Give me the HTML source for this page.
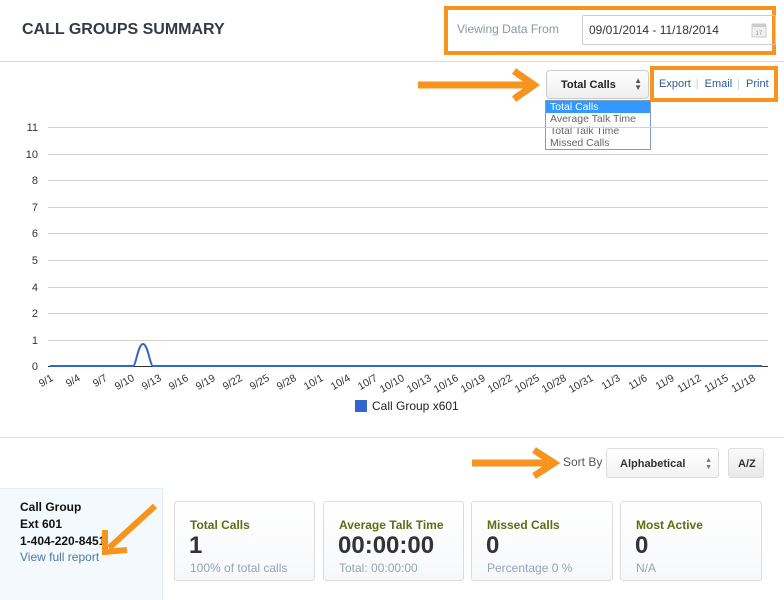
<!DOCTYPE html>
<html><head><meta charset="utf-8"><style>
*{margin:0;padding:0;box-sizing:border-box}
body{width:784px;height:600px;background:#fff;font-family:"Liberation Sans",Arial,sans-serif;position:relative;overflow:hidden}
.a{position:absolute}
.card{position:absolute;top:501px;height:80px;border:1px solid #dcdcdc;border-radius:3px;background:linear-gradient(#fff,#f7f8fa)}
.card .t{position:absolute;left:15px;top:16px;font-size:12px;font-weight:bold;color:#5f6d12}
.card .v{position:absolute;left:14px;top:30px;font-size:24px;font-weight:bold;color:#333}
.card .s{position:absolute;left:15px;top:59px;font-size:12px;color:#94a3b8}
</style></head><body>
<div class="a" style="left:22px;top:21px;font-size:16px;font-weight:bold;color:#333a45">CALL GROUPS SUMMARY</div>
<div class="a" style="left:444px;top:6px;width:332px;height:49px;border:4px solid #f7941d"></div>
<div class="a" style="left:457px;top:22px;font-size:12px;color:#8a96a3">Viewing Data From</div>
<div class="a" style="left:582px;top:15px;width:194px;height:30px;border:1px solid #ccc;border-radius:2px"></div>
<div class="a" style="left:589px;top:23px;font-size:12px;color:#333">09/01/2014 - 11/18/2014</div>
<svg class="a" style="left:751px;top:21px" width="17" height="17"><rect x="1" y="3" width="14" height="13" fill="#f0f0f0" stroke="#ccc"/><rect x="1" y="3" width="14" height="3" fill="#ccc"/><text x="4.5" y="14" font-size="6" fill="#999" font-family="Liberation Sans">17</text></svg>
<div class="a" style="left:0;top:61px;width:784px;height:1px;background:#d8d8d8"></div>
<svg class="a" style="left:418px;top:68px" width="125" height="36"><path d="M0 17H112" stroke="#f7941d" stroke-width="7"/><path d="M96 3L116 17L96 31" fill="none" stroke="#f7941d" stroke-width="7"/></svg>
<div class="a" style="left:546px;top:70px;width:103px;height:29px;border:1px solid #ccc;border-radius:4px;background:linear-gradient(#fff,#eee);font-size:11px;font-weight:bold;color:#222;padding:8px 0 0 14px">Total Calls<span style="position:absolute;right:6px;top:6px;font-size:8px;line-height:7px;color:#555">▲<br>▼</span></div>
<div class="a" style="left:545px;top:100px;width:106px;height:50px;border:1px solid #7a9cc6;background:#fff;font-size:10.5px;line-height:12px;color:#666">
<div style="background:#3399ff;color:#fff;padding-left:4px">Total Calls</div><div style="padding-left:4px">Average Talk Time</div><div style="padding-left:4px">Total Talk Time</div><div style="padding-left:4px">Missed Calls</div></div>
<div class="a" style="left:650px;top:66px;width:128px;height:36px;border:4px solid #f7941d"></div>
<div class="a" style="left:659px;top:78px;font-size:11px;color:#2b5b9a">Export<span style="color:#ccc;margin:0 6px 0 5px">|</span>Email<span style="color:#ccc;margin:0 6px 0 5px">|</span>Print</div>
<svg class="a" style="left:0;top:110px" width="784" height="310" font-family="Liberation Sans" font-size="11" fill="#333">
<g stroke="#d0d0d0" stroke-width="1">
<path d="M48 17.5H768M48 44.5H768M48 70.5H768M48 97.5H768M48 123.5H768M48 150.5H768M48 177.5H768M48 203.5H768M48 230.5H768"/></g>
<g text-anchor="end"><text x="38" y="21">11</text><text x="38" y="48">10</text><text x="38" y="74">8</text><text x="38" y="101">7</text><text x="38" y="127">6</text><text x="38" y="154">5</text><text x="38" y="181">4</text><text x="38" y="207">2</text><text x="38" y="234">1</text><text x="38" y="260">0</text></g>
<path d="M48 256.5H768" stroke="#333"/>
<path d="M50 256H133C136 256 138 234 143 234C148 234 150 256 153 256H762" fill="none" stroke="#3366cc" stroke-width="2"/>
<g text-anchor="end" font-size="10.5">
<text transform="translate(54,270) rotate(-30)">9/1</text><text transform="translate(81,270) rotate(-30)">9/4</text><text transform="translate(108,270) rotate(-30)">9/7</text><text transform="translate(135,270) rotate(-30)">9/10</text><text transform="translate(162,270) rotate(-30)">9/13</text><text transform="translate(189,270) rotate(-30)">9/16</text><text transform="translate(216,270) rotate(-30)">9/19</text><text transform="translate(243,270) rotate(-30)">9/22</text><text transform="translate(270,270) rotate(-30)">9/25</text><text transform="translate(297,270) rotate(-30)">9/28</text><text transform="translate(324,270) rotate(-30)">10/1</text><text transform="translate(351,270) rotate(-30)">10/4</text><text transform="translate(378,270) rotate(-30)">10/7</text><text transform="translate(405,270) rotate(-30)">10/10</text><text transform="translate(432,270) rotate(-30)">10/13</text><text transform="translate(459,270) rotate(-30)">10/16</text><text transform="translate(486,270) rotate(-30)">10/19</text><text transform="translate(513,270) rotate(-30)">10/22</text><text transform="translate(540,270) rotate(-30)">10/25</text><text transform="translate(567,270) rotate(-30)">10/28</text><text transform="translate(594,270) rotate(-30)">10/31</text><text transform="translate(621,270) rotate(-30)">11/3</text><text transform="translate(648,270) rotate(-30)">11/6</text><text transform="translate(675,270) rotate(-30)">11/9</text><text transform="translate(702,270) rotate(-30)">11/12</text><text transform="translate(729,270) rotate(-30)">11/15</text><text transform="translate(756,270) rotate(-30)">11/18</text></g>
<rect x="355" y="290" width="12" height="12" fill="#3366cc"/><text x="372" y="300" font-size="12" fill="#222">Call Group x601</text>
</svg>
<div class="a" style="left:0;top:437px;width:784px;height:1px;background:#e2e2e2"></div>
<svg class="a" style="left:470px;top:447px" width="92" height="36"><path d="M2 16H78" stroke="#f7941d" stroke-width="7"/><path d="M64 3L84 16L64 29" fill="none" stroke="#f7941d" stroke-width="7"/></svg>
<div class="a" style="left:563px;top:455px;font-size:12px;color:#555">Sort By</div>
<div class="a" style="left:606px;top:448px;width:113px;height:30px;border:1px solid #ddd;border-radius:3px;background:linear-gradient(#fff,#f3f3f3);font-size:11px;font-weight:bold;color:#333;padding:9px 0 0 13px">Alphabetical<span style="position:absolute;right:6px;top:8px;font-size:7px;line-height:7px;color:#777">▲<br>▼</span></div>
<div class="a" style="left:728px;top:448px;width:36px;height:30px;border:1px solid #ddd;border-radius:3px;background:linear-gradient(#fafafa,#e8e8e8);font-size:11px;font-weight:bold;color:#333;padding:9px 0 0 9px">A/Z</div>
<div class="a" style="left:0;top:488px;width:163px;height:112px;background:#f3f9fd;border-top:1px solid #e4eef5;border-right:1px solid #e4eef5"></div>
<div class="a" style="left:20px;top:499px;font-size:12px;font-weight:bold;color:#111;line-height:17px">Call Group<br>Ext 601<br>1-404-220-8451</div>
<div class="a" style="left:20px;top:550px;font-size:12px;color:#4a78a8">View full report</div>
<svg class="a" style="left:95px;top:502px" width="66" height="56"><path d="M60 4L14 46" stroke="#f7941d" stroke-width="6"/><path d="M10 28L10 50L32 48" fill="none" stroke="#f7941d" stroke-width="6"/></svg>
<div class="card" style="left:174px;width:141px"><div class="t">Total Calls</div><div class="v">1</div><div class="s">100% of total calls</div></div>
<div class="card" style="left:323px;width:141px"><div class="t">Average Talk Time</div><div class="v">00:00:00</div><div class="s">Total: 00:00:00</div></div>
<div class="card" style="left:471px;width:142px"><div class="t">Missed Calls</div><div class="v">0</div><div class="s">Percentage 0 %</div></div>
<div class="card" style="left:620px;width:142px"><div class="t">Most Active</div><div class="v">0</div><div class="s">N/A</div></div>
</body></html>
